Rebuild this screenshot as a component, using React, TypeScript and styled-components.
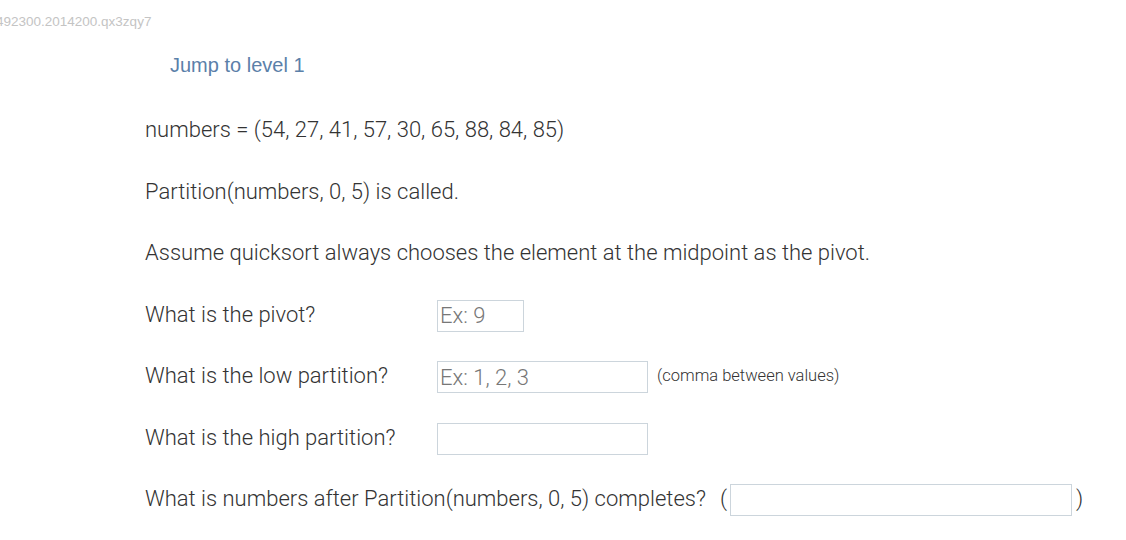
import React from "react";
import styled, { createGlobalStyle } from "styled-components";

const GlobalStyle = createGlobalStyle`
  html, body {
    margin: 0;
    padding: 0;
    background: #ffffff;
  }
`;

const Page = styled.div`
  width: 1126px;
  height: 540px;
  overflow: hidden;
  position: relative;
`;

const TrackId = styled.div`
  font-family: "Liberation Sans", Arial, sans-serif;
  font-size: 13.5px;
  color: #c4c4c4;
  margin: 14px 0 0 -4px;
  line-height: 16px;
`;

const JumpLink = styled.div`
  font-family: "Liberation Sans", Arial, sans-serif;
  font-size: 20px;
  color: #5b80a9;
  margin: 23px 0 0 170px;
  line-height: 24px;
`;

const Body = styled.div`
  font-family: Roboto, "Noto Sans", sans-serif;
  font-weight: 300;
  font-size: 22px;
  color: #333333;
  margin: 40px 0 0 145px;
  display: flex;
  flex-direction: column;
  gap: 35.5px;
`;

const Line = styled.div`
  line-height: 26px;
  display: flex;
  align-items: center;
  white-space: nowrap;
`;

const Label = styled.span<{ $width?: number }>`
  display: inline-block;
  width: ${(p) => (p.$width ? `${p.$width}px` : "auto")};
`;

const Field = styled.input<{ $width: number }>`
  box-sizing: border-box;
  width: ${(p) => p.$width}px;
  height: 32px;
  margin: -2px 0 -4px;
  border: 1px solid #ccd5dc;
  padding: 0 2px;
  font-family: Roboto, "Noto Sans", sans-serif;
  font-weight: 300;
  font-size: 22px;
  color: #333;
  outline: none;
  &::placeholder {
    color: #777;
  }
`;

const Note = styled.span`
  font-size: 16.5px;
  margin-left: 9px;
`;

const Paren = styled.span<{ $left?: boolean }>`
  margin: ${(p) => (p.$left ? "0 3px 0 14px" : "0 0 0 4px")};
`;

export default function App() {
  return (
    <Page>
      <GlobalStyle />
      <TrackId>492300.2014200.qx3zqy7</TrackId>
      <JumpLink>Jump to level 1</JumpLink>
      <Body>
        <Line>numbers = (54, 27, 41, 57, 30, 65, 88, 84, 85)</Line>
        <Line>Partition(numbers, 0, 5) is called.</Line>
        <Line>Assume quicksort always chooses the element at the midpoint as the pivot.</Line>
        <Line>
          <Label $width={292}>What is the pivot?</Label>
          <Field $width={87} placeholder="Ex: 9" />
        </Line>
        <Line>
          <Label $width={292}>What is the low partition?</Label>
          <Field $width={211} placeholder="Ex: 1, 2, 3" />
          <Note>(comma between values)</Note>
        </Line>
        <Line>
          <Label $width={292}>What is the high partition?</Label>
          <Field $width={211} />
        </Line>
        <Line>
          <Label>What is numbers after Partition(numbers, 0, 5) completes?</Label>
          <Paren $left>(</Paren>
          <Field $width={342} />
          <Paren>)</Paren>
        </Line>
      </Body>
    </Page>
  );
}
